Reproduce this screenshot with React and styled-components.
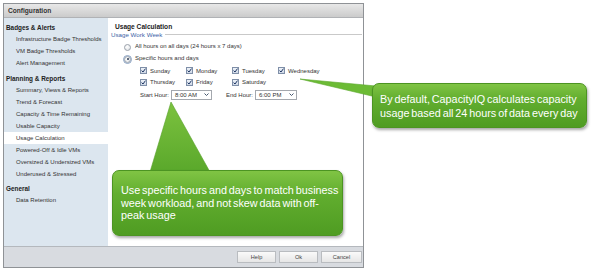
import React from "react"
import styled, { createGlobalStyle } from "styled-components"

const GlobalStyle = createGlobalStyle`
  html, body {
    margin: 0;
    padding: 0;
    background: #fff;
  }
  body {
    font-family: "Liberation Sans", Arial, sans-serif;
  }
`

const Stage = styled.div`
  position: relative;
  width: 600px;
  height: 278px;
  padding: 3px 0 0 3px;
  box-sizing: border-box;
  overflow: hidden;
`

const Dialog = styled.div`
  width: 361px;
  height: 265px;
  box-sizing: border-box;
  border: 1px solid #8f9296;
  display: flex;
  flex-direction: column;
  background: #fff;
`

const TitleBar = styled.div`
  height: 14px;
  box-sizing: border-box;
  padding-left: 4px;
  display: flex;
  align-items: center;
  background: linear-gradient(#e8e8e8, #cbcbcb);
  border-bottom: 1px solid #b0b2b5;
  font-size: 6.6px;
  font-weight: bold;
  color: #333;
`

const Body = styled.div`
  flex: 1;
  display: flex;
  min-height: 0;
`

const Sidebar = styled.div`
  width: 104px;
  background: #dce6ef;
  padding-top: 4px;
  box-sizing: border-box;
`

const GroupHeading = styled.div`
  height: 11px;
  line-height: 11px;
  padding-left: 2px;
  margin-top: ${(p) => (p.$first ? 0 : 3.5)}px;
  font-size: 6.4px;
  font-weight: bold;
  color: #222;
`

const NavItem = styled.div`
  height: 12px;
  line-height: 12px;
  padding-left: 12px;
  font-size: 6px;
  color: #333;
  background: ${(p) => (p.$active ? "#fff" : "transparent")};
`

const Content = styled.div`
  flex: 1;
  padding: 5px 1px 0 3px;
  font-size: 6px;
  color: #333;
`

const PanelTitle = styled.div`
  padding-left: 4px;
  font-size: 6.6px;
  font-weight: bold;
  color: #222;
  line-height: 8px;
`

const Legend = styled.div`
  display: flex;
  align-items: center;
  line-height: 7px;
  color: #3b62a6;
  font-size: 6.2px;
  &::after {
    content: "";
    flex: 1;
    border-top: 1px solid #c9c9c9;
    margin-left: 3px;
  }
`

const Options = styled.div`
  padding-left: 13px;
  padding-top: 2px;
`

const RadioRow = styled.div`
  display: flex;
  align-items: center;
  height: 12px;
  gap: 4px;
`

const Radio = styled.span`
  width: 7px;
  height: 7px;
  border-radius: 50%;
  box-sizing: border-box;
  border: 1px solid #9aa1aa;
  background: radial-gradient(circle at 40% 35%, #fff, #dcdfe3);
  position: relative;
  top: 1px;
  &::after {
    content: "";
    display: ${(p) => (p.$checked ? "block" : "none")};
    position: absolute;
    left: 1.5px;
    top: 1.5px;
    width: 2px;
    height: 2px;
    border-radius: 50%;
    background: #2c3d55;
  }
  outline: ${(p) => (p.$checked ? "1px solid #8aa2c2" : "none")};
  outline-offset: 0;
`

const DayGrid = styled.div`
  display: grid;
  grid-template-columns: repeat(4, 46px);
  grid-auto-rows: 11.5px;
  padding-left: 29px;
  margin-top: 1px;
`

const Day = styled.label`
  display: flex;
  align-items: center;
  gap: 3px;
`

const Box = styled.span`
  width: 7px;
  height: 7px;
  box-sizing: border-box;
  border: 1px solid #7f8fa8;
  background: linear-gradient(#eef2f8, #cdd7e5);
  display: flex;
  align-items: center;
  justify-content: center;
  svg {
    display: block;
  }
`

const HourRow = styled.div`
  display: flex;
  align-items: center;
  padding-left: 29px;
  margin-top: 1px;
  height: 11px;
`

const HourLabel = styled.span`
  margin-right: 2px;
  margin-left: ${(p) => p.$gap || 0}px;
`

const Select = styled.div`
  width: ${(p) => p.$w}px;
  height: 10px;
  box-sizing: border-box;
  border: 1px solid #a4a8ae;
  background: #fff;
  display: flex;
  align-items: center;
  justify-content: space-between;
  padding: 0 2px 0 3px;
`

const Footer = styled.div`
  height: 21px;
  box-sizing: border-box;
  border-top: 1px solid #b4b8bd;
  background: #d8dbe0;
  display: flex;
  align-items: center;
  justify-content: flex-end;
  gap: 3px;
  padding-right: 1px;
`

const Button = styled.div`
  width: ${(p) => p.$w}px;
  height: 12px;
  box-sizing: border-box;
  border: 1px solid #b9bcc0;
  background: linear-gradient(#fafafa, #e6e6e6);
  font-size: 5.6px;
  color: #444;
  display: flex;
  align-items: center;
  justify-content: center;
`

const Pointers = styled.svg`
  position: absolute;
  left: 0;
  top: 0;
  pointer-events: none;
`

const Callout = styled.div`
  position: absolute;
  left: ${(p) => p.$x}px;
  top: ${(p) => p.$y}px;
  width: ${(p) => p.$w}px;
  height: ${(p) => p.$h}px;
  box-sizing: border-box;
  padding: 0 0 0 ${(p) => p.$pad}px;
  display: flex;
  align-items: center;
  border-radius: 7px;
  border: 1px solid #4c9422;
  background: linear-gradient(#80c444 0%, #62ae2f 35%, #4f9c22 100%);
  box-shadow: 1px 2px 3px rgba(0, 0, 0, 0.35);
  color: #fff;
  font-size: 10.8px;
  line-height: ${(p) => p.$lh}px;
  word-spacing: -1.1px;
  white-space: nowrap;
`

const groups = [
  {
    title: "Badges & Alerts",
    items: ["Infrastructure Badge Thresholds", "VM Badge Thresholds", "Alert Management"],
  },
  {
    title: "Planning & Reports",
    items: [
      "Summary, Views & Reports",
      "Trend & Forecast",
      "Capacity & Time Remaining",
      "Usable Capacity",
      "Usage Calculation",
      "Powered-Off & Idle VMs",
      "Oversized & Undersized VMs",
      "Underused & Stressed",
    ],
  },
  { title: "General", items: ["Data Retention"] },
]

const days = ["Sunday", "Monday", "Tuesday", "Wednesday", "Thursday", "Friday", "Saturday"]

function Check() {
  return (
    <Box>
      <svg width="5" height="5" viewBox="0 0 5 5">
        <path d="M0.6 2.6 L2 4 L4.5 0.6" fill="none" stroke="#1d3561" strokeWidth="1" />
      </svg>
    </Box>
  )
}

function Chevron() {
  return (
    <svg width="5" height="3" viewBox="0 0 5 3">
      <path d="M0.5 0.5 L2.5 2.5 L4.5 0.5" fill="none" stroke="#45566e" strokeWidth="1" />
    </svg>
  )
}

export default function App() {
  return (
    <Stage>
      <GlobalStyle />
      <Dialog>
        <TitleBar>Configuration</TitleBar>
        <Body>
          <Sidebar>
            {groups.map((g, gi) => (
              <div key={g.title}>
                <GroupHeading $first={gi === 0}>{g.title}</GroupHeading>
                {g.items.map((item) => (
                  <NavItem key={item} $active={item === "Usage Calculation"}>
                    {item}
                  </NavItem>
                ))}
              </div>
            ))}
          </Sidebar>
          <Content>
            <PanelTitle>Usage Calculation</PanelTitle>
            <Legend>Usage Work Week</Legend>
            <Options>
              <RadioRow>
                <Radio />
                <span>All hours on all days (24 hours x 7 days)</span>
              </RadioRow>
              <RadioRow>
                <Radio $checked />
                <span>Specific hours and days</span>
              </RadioRow>
            </Options>
            <DayGrid>
              {days.map((d) => (
                <Day key={d}>
                  <Check />
                  {d}
                </Day>
              ))}
            </DayGrid>
            <HourRow>
              <HourLabel>Start Hour:</HourLabel>
              <Select $w={41}>
                8:00 AM <Chevron />
              </Select>
              <HourLabel $gap={14}>End Hour:</HourLabel>
              <Select $w={42}>
                6:00 PM <Chevron />
              </Select>
            </HourRow>
          </Content>
        </Body>
        <Footer>
          <Button $w={39}>Help</Button>
          <Button $w={39}>Ok</Button>
          <Button $w={41}>Cancel</Button>
        </Footer>
      </Dialog>

      <Pointers width="600" height="278" viewBox="0 0 600 278">
        <defs>
          <linearGradient id="ptr" x1="0" y1="0" x2="0" y2="1">
            <stop offset="0" stopColor="#7cc23f" />
            <stop offset="1" stopColor="#5aa82b" />
          </linearGradient>
        </defs>
        <polygon points="171,102 150,172 210,172" fill="url(#ptr)" stroke="#55a028" strokeWidth="0.6" />
        <polygon points="300,79 376,86 376,97" fill="#6cbb35" stroke="#5aa82b" strokeWidth="0.6" />
      </Pointers>

      <Callout $x={112} $y={170} $w={231} $h={66} $pad={8} $lh={12.5}>
        <div>
          Use specific hours and days to match business
          <br />
          week workload, and not skew data with off-
          <br />
          peak usage
        </div>
      </Callout>
      <Callout $x={372} $y={83} $w={215} $h={45} $pad={7} $lh={14}>
        <div>
          By default, CapacityIQ calculates capacity
          <br />
          usage based all 24 hours of data every day
        </div>
      </Callout>
    </Stage>
  )
}
